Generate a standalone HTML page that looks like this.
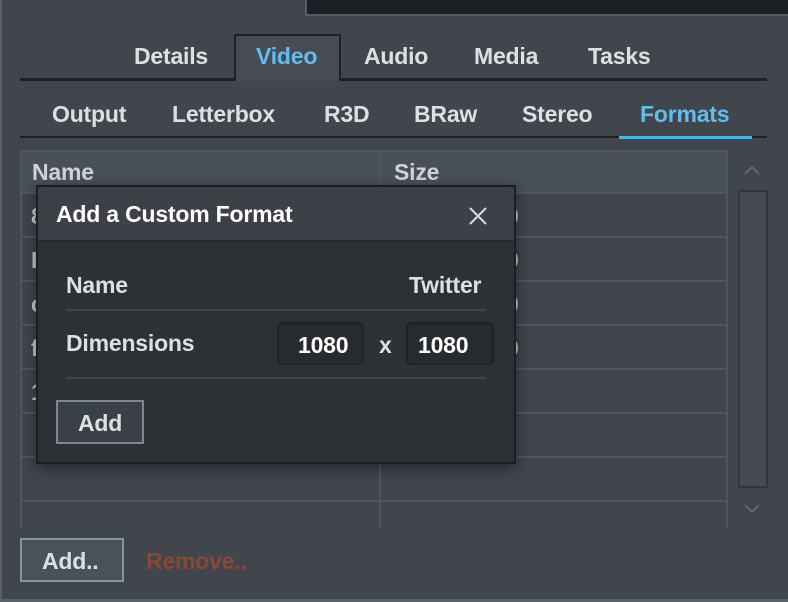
<!DOCTYPE html>
<html><head><style>
*{margin:0;padding:0;box-sizing:border-box}
body{width:788px;height:602px;background:#41464d;font-family:"Liberation Sans",sans-serif;position:relative;overflow:hidden;color:#dde0e3}
.a{position:absolute;white-space:nowrap}
.t{font-size:23px;font-weight:bold;letter-spacing:-0.2px}
</style></head><body>
<div class="a" style="left:0;top:0;width:2px;height:602px;background:#5a6068"></div>
<div class="a" style="left:0;top:599px;width:788px;height:3px;background:#5a6068"></div>
<div class="a" style="left:305px;top:0;width:483px;height:16px;background:#1c1f23;border-left:2px solid #555b62;border-bottom:2px solid #555b62"></div>
<!-- main tabs -->
<div class="a" style="left:20px;top:78px;width:747px;height:3px;background:#1e2125"></div>
<div class="a" style="left:234px;top:34px;width:107px;height:47px;background:#474c54;border:2px solid #1e2125;border-bottom:none"></div>
<div class="a t" style="left:134px;top:43px">Details</div>
<div class="a t" style="left:256px;top:43px;color:#5ebfef">Video</div>
<div class="a t" style="left:364px;top:43px">Audio</div>
<div class="a t" style="left:474px;top:43px">Media</div>
<div class="a t" style="left:588px;top:43px">Tasks</div>
<!-- sub tabs -->
<div class="a" style="left:20px;top:136px;width:747px;height:2px;background:#1e2125"></div>
<div class="a" style="left:619px;top:136px;width:133px;height:3px;background:#4fb3e6"></div>
<div class="a t" style="left:52px;top:101px">Output</div>
<div class="a t" style="left:172px;top:101px">Letterbox</div>
<div class="a t" style="left:324px;top:101px">R3D</div>
<div class="a t" style="left:414px;top:101px">BRaw</div>
<div class="a t" style="left:522px;top:101px">Stereo</div>
<div class="a t" style="left:640px;top:101px;color:#5ebfef">Formats</div>
<!-- table -->
<div class="a" style="left:20px;top:150px;width:708px;height:378px;border:2px solid #50565e;border-bottom:none"></div>
<div class="a" style="left:22px;top:152px;width:704px;height:41px;background:#4a5058"></div>
<div class="a" style="left:379px;top:152px;width:2px;height:376px;background:#50565e"></div>
<div class="a" style="left:20px;top:192px;width:708px;height:2px;background:#50565e"></div>
<div class="a" style="left:20px;top:236px;width:708px;height:2px;background:#50565e"></div>
<div class="a" style="left:20px;top:280px;width:708px;height:2px;background:#50565e"></div>
<div class="a" style="left:20px;top:324px;width:708px;height:2px;background:#50565e"></div>
<div class="a" style="left:20px;top:368px;width:708px;height:2px;background:#50565e"></div>
<div class="a" style="left:20px;top:412px;width:708px;height:2px;background:#50565e"></div>
<div class="a" style="left:20px;top:456px;width:708px;height:2px;background:#50565e"></div>
<div class="a" style="left:20px;top:500px;width:708px;height:2px;background:#50565e"></div>
<div class="a t" style="left:32px;top:159px;color:#d0d4d8">Name</div>
<div class="a t" style="left:394px;top:159px;color:#d0d4d8">Size</div>
<div class="a t" style="left:31px;top:203px;color:#c8ccd0">8</div>
<div class="a t" style="left:31px;top:247px;color:#c8ccd0">H</div>
<div class="a t" style="left:31px;top:291px;color:#c8ccd0">c</div>
<div class="a t" style="left:31px;top:335px;color:#c8ccd0">f</div>
<div class="a t" style="left:31px;top:379px;color:#c8ccd0">1</div>
<div class="a t" style="left:506px;top:203px;color:#c8ccd0">0</div>
<div class="a t" style="left:506px;top:247px;color:#c8ccd0">0</div>
<div class="a t" style="left:506px;top:291px;color:#c8ccd0">0</div>
<div class="a t" style="left:506px;top:335px;color:#c8ccd0">0</div>
<!-- scrollbar -->
<svg class="a" style="left:744px;top:164px" width="16" height="12"><path d="M1 10L8 3L15 10" stroke="#6b7178" stroke-width="1.5" fill="none"/></svg>
<svg class="a" style="left:744px;top:503px" width="16" height="12"><path d="M1 2L8 9L15 2" stroke="#6b7178" stroke-width="1.5" fill="none"/></svg>
<div class="a" style="left:738px;top:190px;width:30px;height:298px;background:#464b52;border:2px solid #33373c"></div>
<!-- bottom buttons -->
<div class="a" style="left:20px;top:538px;width:104px;height:44px;background:#4a5259;border:2px solid #8794a0"></div>
<div class="a t" style="left:42px;top:548px">Add..</div>
<div class="a t" style="left:146px;top:548px;color:#8a4636">Remove..</div>
<!-- dialog -->
<div class="a" style="left:36px;top:185px;width:480px;height:279px;background:#2d3035;border:2px solid #1c1e21;box-shadow:0 4px 14px rgba(0,0,0,.45)"></div>
<div class="a" style="left:38px;top:187px;width:476px;height:55px;background:#3d4147;border-bottom:2px solid #25282c"></div>
<div class="a t" style="left:56px;top:201px;color:#fff">Add a Custom Format</div>
<svg class="a" style="left:468px;top:206px" width="20" height="20"><path d="M2 2L18 18M18 2L2 18" stroke="#d8dbde" stroke-width="2"/></svg>
<div class="a t" style="left:66px;top:272px">Name</div>
<div class="a t" style="left:409px;top:272px">Twitter</div>
<div class="a" style="left:66px;top:309px;width:420px;height:2px;background:#40444a"></div>
<div class="a t" style="left:66px;top:330px">Dimensions</div>
<div class="a" style="left:277px;top:322px;width:87px;height:43px;background:#272a2e;border:2px solid #202326;border-radius:5px"></div>
<div class="a t" style="left:298px;top:332px;color:#fff">1080</div>
<div class="a t" style="left:379px;top:332px">x</div>
<div class="a" style="left:406px;top:322px;width:88px;height:43px;background:#272a2e;border:2px solid #202326;border-radius:5px"></div>
<div class="a t" style="left:418px;top:332px;color:#fff">1080</div>
<div class="a" style="left:66px;top:377px;width:420px;height:2px;background:#40444a"></div>
<div class="a" style="left:56px;top:400px;width:88px;height:44px;background:#3b4046;border:2px solid #7b8793"></div>
<div class="a t" style="left:78px;top:410px">Add</div>
</body></html>
